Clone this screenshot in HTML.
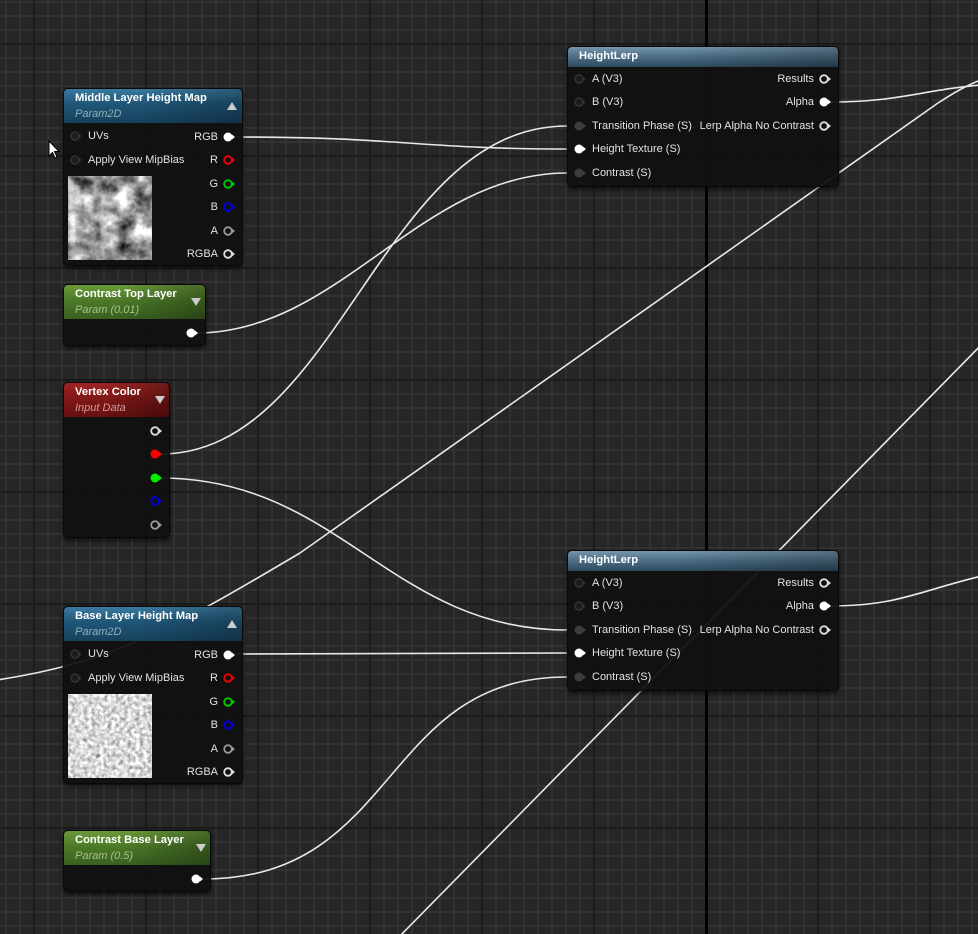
<!DOCTYPE html>
<html><head><meta charset="utf-8">
<style>
html,body{margin:0;padding:0;}
body{width:978px;height:934px;overflow:hidden;position:relative;
background-color:#262626;
background-image:linear-gradient(to right,#1b1b1b 2px,transparent 2px),linear-gradient(to bottom,#1b1b1b 2px,transparent 2px),linear-gradient(to right,#323232 2px,transparent 2px),linear-gradient(to bottom,#323232 2px,transparent 2px);
background-size:112px 112px,112px 112px,14px 14px,14px 14px;
background-position:33px 0,0 43px,5px 0,0 1px;
font-family:"Liberation Sans",sans-serif;}
.abs{position:absolute;}
.node{position:absolute;background:rgba(16,16,16,.94);border-radius:5px;box-shadow:0 2px 5px rgba(0,0,0,.7);border:1px solid #080808;box-sizing:border-box;}
.hd{position:absolute;left:0;right:0;top:0;height:34px;border-radius:4px 4px 0 0;}
.blue{background:linear-gradient(to right,rgba(0,0,0,0) 40%,rgba(0,0,0,.25)),linear-gradient(to bottom,#3a7aa0,#1f5577 45%,#17425e);}
.green{background:linear-gradient(to right,rgba(0,0,0,0) 40%,rgba(0,0,0,.3)),linear-gradient(to bottom,#6a9a3a,#4c7a28 45%,#3a6020);}
.red{background:linear-gradient(to right,rgba(0,0,0,0) 40%,rgba(0,0,0,.3)),linear-gradient(to bottom,#a02424,#821818 45%,#661010);}
.hl{height:20px;background:linear-gradient(to right,rgba(0,0,0,0) 40%,rgba(0,0,0,.25)),linear-gradient(to bottom,#7696ac,#4a6c84 50%,#2e4a5e);}
.t{position:absolute;left:11px;top:3px;color:#fff;font-weight:bold;font-size:11.2px;white-space:nowrap;}
.s{position:absolute;left:11px;top:19px;font-style:italic;font-size:11px;white-space:nowrap;}
.l{position:absolute;color:#e2e2e2;font-size:11px;line-height:14px;white-space:nowrap;}
.r{text-align:right;}
.tri{position:absolute;width:0;height:0;border-left:5px solid transparent;border-right:5px solid transparent;}
</style></head><body>
<div class="abs" style="left:705px;top:0;width:3px;height:934px;background:#000"></div>

<svg class="abs" style="left:0;top:0" width="978" height="934">
<g fill="none" stroke="#e8e8e8" stroke-width="1.6">
<path d="M-10 681 C 110 664 170 630 300 553 L 938 103 C 955 92 965 86 990 76"/>
<path d="M 990 336 L 396 940"/>
<path d="M 830 102 C 900 102 920 90 990 84"/>
<path d="M 830 606 C 900 606 920 590 990 574"/>
<path d="M 160 454 C 340 454 380 126 567 126"/>
<path d="M 196 333 C 340 333 420 173 567 173"/>
<path d="M 236 137 C 400 137 420 149 567 149"/>
<path d="M 160 478 C 340 478 390 630 567 630"/>
<path d="M 236 654 C 400 654 420 653 567 653"/>
<path d="M 203 879 C 400 879 380 677 567 677"/>
</g>
</svg>

<div class="node" style="left:63px;top:88px;width:180px;height:178px;">
<div class="hd blue"><div class="t">Middle Layer Height Map</div><div class="s" style="color:#8fb0b8">Param2D</div></div>
<div class="tri" style="left:163px;top:13px;border-bottom:8px solid #ccc"></div>
</div>
<div class="node" style="left:63px;top:284px;width:143px;height:62px;">
<div class="hd green"><div class="t">Contrast Top Layer</div><div class="s" style="color:#a9c08a">Param (0.01)</div></div>
<div class="tri" style="left:127px;top:13px;border-top:8px solid #ccc"></div>
</div>
<div class="node" style="left:63px;top:382px;width:107px;height:156px;">
<div class="hd red"><div class="t">Vertex Color</div><div class="s" style="color:#d09a9a">Input Data</div></div>
<div class="tri" style="left:91px;top:13px;border-top:8px solid #ccc"></div>
</div>
<div class="node" style="left:63px;top:606px;width:180px;height:178px;">
<div class="hd blue"><div class="t">Base Layer Height Map</div><div class="s" style="color:#8fb0b8">Param2D</div></div>
<div class="tri" style="left:163px;top:13px;border-bottom:8px solid #ccc"></div>
</div>
<div class="node" style="left:63px;top:830px;width:148px;height:62px;">
<div class="hd green"><div class="t">Contrast Base Layer</div><div class="s" style="color:#a9c08a">Param (0.5)</div></div>
<div class="tri" style="left:132px;top:13px;border-top:8px solid #ccc"></div>
</div>
<div class="node" style="left:567px;top:46px;width:272px;height:141px;">
<div class="hd hl"><div class="t" style="top:3px">HeightLerp</div></div>
</div>
<div class="node" style="left:567px;top:550px;width:272px;height:141px;">
<div class="hd hl"><div class="t" style="top:3px">HeightLerp</div></div>
</div>

<svg class="abs" style="left:68px;top:176px" width="84" height="84">
<filter id="f1" color-interpolation-filters="sRGB"><feTurbulence type="fractalNoise" baseFrequency="0.06" numOctaves="5" seed="3"/><feColorMatrix type="matrix" values="0.5 0.5 0 0 0  0.5 0.5 0 0 0  0.5 0.5 0 0 0  0 0 0 0 1"/><feComponentTransfer><feFuncR type="linear" slope="2.2" intercept="-0.5"/><feFuncG type="linear" slope="2.2" intercept="-0.5"/><feFuncB type="linear" slope="2.2" intercept="-0.5"/></feComponentTransfer></filter>
<rect width="84" height="84" filter="url(#f1)"/></svg>
<svg class="abs" style="left:68px;top:694px" width="84" height="84">
<filter id="f2" color-interpolation-filters="sRGB"><feTurbulence type="fractalNoise" baseFrequency="0.25" numOctaves="3" seed="7"/><feColorMatrix type="matrix" values="0.5 0.5 0 0 0  0.5 0.5 0 0 0  0.5 0.5 0 0 0  0 0 0 0 1"/><feComponentTransfer><feFuncR type="linear" slope="1.2" intercept="0.25"/><feFuncG type="linear" slope="1.2" intercept="0.25"/><feFuncB type="linear" slope="1.2" intercept="0.25"/></feComponentTransfer></filter>
<rect width="84" height="84" filter="url(#f2)"/></svg>

<div class="l" style="left:88px;top:129px">UVs</div>
<div class="l" style="left:88px;top:153px">Apply View MipBias</div>
<div class="l r" style="left:160px;width:58px;top:130px">RGB</div>
<div class="l r" style="left:160px;width:58px;top:153px">R</div>
<div class="l r" style="left:160px;width:58px;top:177px">G</div>
<div class="l r" style="left:160px;width:58px;top:200px">B</div>
<div class="l r" style="left:160px;width:58px;top:224px">A</div>
<div class="l r" style="left:160px;width:58px;top:247px">RGBA</div>

<div class="l" style="left:88px;top:647px">UVs</div>
<div class="l" style="left:88px;top:671px">Apply View MipBias</div>
<div class="l r" style="left:160px;width:58px;top:648px">RGB</div>
<div class="l r" style="left:160px;width:58px;top:671px">R</div>
<div class="l r" style="left:160px;width:58px;top:695px">G</div>
<div class="l r" style="left:160px;width:58px;top:718px">B</div>
<div class="l r" style="left:160px;width:58px;top:742px">A</div>
<div class="l r" style="left:160px;width:58px;top:765px">RGBA</div>

<div class="l" style="left:592px;top:72px">A (V3)</div>
<div class="l" style="left:592px;top:95px">B (V3)</div>
<div class="l" style="left:592px;top:119px">Transition Phase (S)</div>
<div class="l" style="left:592px;top:142px">Height Texture (S)</div>
<div class="l" style="left:592px;top:166px">Contrast (S)</div>
<div class="l r" style="left:680px;width:134px;top:72px">Results</div>
<div class="l r" style="left:680px;width:134px;top:95px">Alpha</div>
<div class="l r" style="left:680px;width:134px;top:119px">Lerp Alpha No Contrast</div>

<div class="l" style="left:592px;top:576px">A (V3)</div>
<div class="l" style="left:592px;top:599px">B (V3)</div>
<div class="l" style="left:592px;top:623px">Transition Phase (S)</div>
<div class="l" style="left:592px;top:646px">Height Texture (S)</div>
<div class="l" style="left:592px;top:670px">Contrast (S)</div>
<div class="l r" style="left:680px;width:134px;top:576px">Results</div>
<div class="l r" style="left:680px;width:134px;top:599px">Alpha</div>
<div class="l r" style="left:680px;width:134px;top:623px">Lerp Alpha No Contrast</div>

<svg class="abs" style="left:0;top:0" width="978" height="934">
<defs>
<g id="fo"><circle r="4.5"/><path d="M4 -2.5 L7 0 L4 2.5Z"/></g>
<g id="ho"><circle r="3.8" fill="#111" stroke-width="1.8"/><path d="M4 -2.5 L7 0 L4 2.5Z" stroke="none"/></g>
<g id="di"><circle r="4" fill="#1c1c1c" stroke="#333" stroke-width="1.5"/><path d="M4.5 -2 L6.5 0 L4.5 2Z" fill="#333"/></g>
<g id="gi"><circle r="4.5" fill="#3c3c3c"/><path d="M4 -2.5 L7 0 L4 2.5Z" fill="#3c3c3c"/></g>
</defs>
<use href="#di" x="75" y="136"/><use href="#di" x="75" y="160"/>
<use href="#fo" x="228" y="137" fill="#fff"/>
<use href="#ho" x="228" y="160" stroke="#e00" fill="#e00"/>
<use href="#ho" x="228" y="184" stroke="#0c0" fill="#0c0"/>
<use href="#ho" x="228" y="207" stroke="#00d" fill="#00d"/>
<use href="#ho" x="228" y="231" stroke="#999" fill="#999"/>
<use href="#ho" x="228" y="254" stroke="#ddd" fill="#ddd"/>
<use href="#di" x="75" y="654"/><use href="#di" x="75" y="678"/>
<use href="#fo" x="228" y="655" fill="#fff"/>
<use href="#ho" x="228" y="678" stroke="#e00" fill="#e00"/>
<use href="#ho" x="228" y="702" stroke="#0c0" fill="#0c0"/>
<use href="#ho" x="228" y="725" stroke="#00d" fill="#00d"/>
<use href="#ho" x="228" y="749" stroke="#999" fill="#999"/>
<use href="#ho" x="228" y="772" stroke="#ddd" fill="#ddd"/>
<use href="#fo" x="191" y="333" fill="#fff"/>
<use href="#fo" x="196" y="879" fill="#fff"/>
<use href="#ho" x="155" y="431" stroke="#ddd" fill="#ddd"/>
<use href="#fo" x="155" y="454" fill="#f00"/>
<use href="#fo" x="155" y="478" fill="#0e0"/>
<use href="#ho" x="155" y="501" stroke="#00d" fill="#00d"/>
<use href="#ho" x="155" y="525" stroke="#999" fill="#999"/>
<use href="#di" x="579" y="79"/><use href="#di" x="579" y="102"/>
<use href="#gi" x="579" y="126"/><use href="#fo" x="579" y="149" fill="#fff"/><use href="#gi" x="579" y="173"/>
<use href="#ho" x="824" y="79" stroke="#ddd" fill="#ddd"/>
<use href="#fo" x="824" y="102" fill="#fff"/>
<use href="#ho" x="824" y="126" stroke="#ddd" fill="#ddd"/>
<use href="#di" x="579" y="583"/><use href="#di" x="579" y="606"/>
<use href="#gi" x="579" y="630"/><use href="#fo" x="579" y="653" fill="#fff"/><use href="#gi" x="579" y="677"/>
<use href="#ho" x="824" y="583" stroke="#ddd" fill="#ddd"/>
<use href="#fo" x="824" y="606" fill="#fff"/>
<use href="#ho" x="824" y="630" stroke="#ddd" fill="#ddd"/>
<path d="M49 141 L49 156 L52.5 152.5 L55 158 L57 157 L54.5 151.5 L59 151.5 Z" fill="#fff" stroke="#000" stroke-width="1"/>
</svg>
</body></html>
